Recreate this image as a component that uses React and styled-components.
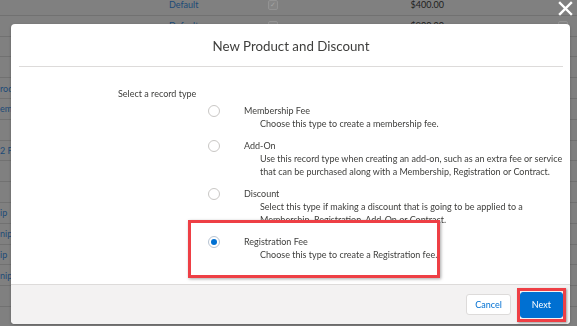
import React from 'react';
import styled, { createGlobalStyle } from 'styled-components';

const GlobalStyle = createGlobalStyle`
  html, body {
    margin: 0;
    padding: 0;
    background: #808080;
    overflow: hidden;
  }
  body {
    font-family: Lato, "Liberation Sans", sans-serif;
    color: #3e3e3c;
  }
`;

const Page = styled.div`
  width: 577px;
  height: 326px;
  overflow: hidden;
  margin-top: -5px;
`;

const Row = styled.div`
  box-sizing: border-box;
  height: 20.8px;
  border-bottom: 1px solid #717171;
  display: grid;
  grid-template-columns: 169px 99px 60px 116px 1fr;
  align-items: center;
  font-size: 9px;
  color: #1c1c1c;
`;

const LinkText = styled.span`
  color: #1c4a77;
  white-space: nowrap;
  overflow: hidden;
`;

const Price = styled.span`
  text-align: right;
  color: #1e1e1e;
`;

const Check = styled.span`
  box-sizing: border-box;
  width: 10px;
  height: 10px;
  border: 1px solid #939393;
  border-radius: 2px;
  background: #858585;
  display: flex;
  align-items: center;
  justify-content: center;
  color: #a4a4a4;
  font-size: 7px;
  margin-left: ${(p) => p.$shift || 0}px;
`;

const CloseButton = styled.button`
  position: fixed;
  top: 1px;
  right: 4px;
  width: 15px;
  height: 15px;
  padding: 0;
  border: none;
  background: none;
  cursor: pointer;
`;

const Modal = styled.section`
  position: fixed;
  left: 11px;
  top: 24px;
  width: 559px;
  height: 300px;
  background: #fff;
  border-radius: 4px;
  box-shadow: 0 1px 3px rgba(0, 0, 0, 0.25);
  display: flex;
  flex-direction: column;
`;

const Header = styled.header`
  box-sizing: border-box;
  height: 43px;
  padding-top: 2px;
  margin: 0 7px 0 8px;
  border-bottom: 1px solid #dddbda;
  display: flex;
  align-items: center;
  justify-content: center;
`;

const Title = styled.h2`
  margin: 0;
  font-size: 13.3px;
  font-weight: 400;
  color: #3e3e3c;
`;

const Body = styled.div`
  flex: 1;
  padding: 20px 0 0 107px;
  font-size: 9px;
  line-height: 13px;
  color: #3e3e3c;
`;

const Prompt = styled.div`
  margin-bottom: 4px;
`;

const Options = styled.div`
  margin-left: 90px;
  display: flex;
  flex-direction: column;
  gap: 9px;
`;

const Option = styled.label`
  display: grid;
  grid-template-columns: 12px 1fr;
  column-gap: 24px;
  position: relative;
  z-index: ${(p) => (p.$marked ? 2 : 0)};
`;

const Radio = styled.span`
  box-sizing: border-box;
  width: 12px;
  height: 12px;
  margin-top: 1px;
  border-radius: 50%;
  border: 1px solid ${(p) => (p.$checked ? '#b8c4d2' : '#c9c7c5')};
  background: #fff;
  display: flex;
  align-items: center;
  justify-content: center;
  &::after {
    content: '';
    width: 6px;
    height: 6px;
    border-radius: 50%;
    background: ${(p) => (p.$checked ? '#0070d2' : 'transparent')};
  }
`;

const Name = styled.div`
  color: #3e3e3c;
`;

const Desc = styled.div`
  padding-left: 16px;
  max-width: 309px;
`;

const Highlight = styled.div`
  box-sizing: border-box;
  position: absolute;
  left: -20px;
  top: -15px;
  width: 252px;
  height: 58px;
  border: 3px solid #ee3f45;
  background: #fff;
  box-shadow: 1px 1px 3px rgba(0, 0, 0, 0.35);
  z-index: -1;
`;

const Footer = styled.footer`
  box-sizing: border-box;
  height: 40px;
  background: #f3f2f2;
  border-top: 1px solid #dddbda;
  border-radius: 0 0 4px 4px;
  display: flex;
  align-items: center;
  justify-content: flex-end;
  gap: 9px;
  padding-right: 7px;
`;

const Button = styled.button`
  box-sizing: border-box;
  height: ${(p) => (p.$brand ? 26 : 21)}px;
  padding: 0 ${(p) => (p.$brand ? 11 : 8)}px;
  border-radius: 3px;
  border: 1px solid ${(p) => (p.$brand ? '#0070d2' : '#dddbda')};
  background: ${(p) => (p.$brand ? '#0070d2' : '#fff')};
  color: ${(p) => (p.$brand ? '#fff' : '#0070d2')};
  font-family: Lato, "Liberation Sans", sans-serif;
  font-size: 9px;
  cursor: pointer;
`;

const Marked = styled.span`
  position: relative;
  display: inline-flex;
  &::after {
    content: '';
    position: absolute;
    left: -3px;
    top: -4px;
    right: -3px;
    bottom: -4px;
    border: 3px solid #ee3f45;
    box-shadow: 1px 1px 2px rgba(0, 0, 0, 0.35);
    pointer-events: none;
  }
`;

const rows = [
  { link: 'Default', check: true, price: '$400.00' },
  { link: 'Default', check: false, price: '$900.00', right: true },
  {},
  {},
  { left: 'rod' },
  { left: 'emb' },
  {},
  { left: '2 F' },
  {},
  {},
  { left: 'ip' },
  { left: 'nip' },
  { left: 'ip' },
  { left: 'nip' },
  {},
  {},
];

const options = [
  {
    name: 'Membership Fee',
    desc: 'Choose this type to create a membership fee.',
  },
  {
    name: 'Add-On',
    desc: 'Use this record type when creating an add-on, such as an extra fee or service that can be purchased along with a Membership, Registration or Contract.',
  },
  {
    name: 'Discount',
    desc: 'Select this type if making a discount that is going to be applied to a Membership, Registration, Add-On or Contract.',
  },
  {
    name: 'Registration Fee',
    desc: 'Choose this type to create a Registration fee.',
    checked: true,
  },
];

export default function App() {
  return (
    <>
      <GlobalStyle />
      <Page>
        {rows.map((r, i) => (
          <Row key={i}>
            <LinkText>{r.left || ''}</LinkText>
            <LinkText>{r.link || ''}</LinkText>
            <span>{r.price ? <Check>{r.check ? '✓' : ''}</Check> : null}</span>
            <Price>{r.price || ''}</Price>
            <span>{r.right ? <Check $shift={114} /> : null}</span>
          </Row>
        ))}
      </Page>
      <CloseButton aria-label="Close">
        <svg width="15" height="15" viewBox="0 0 15 15">
          <path d="M2 2 L13 13 M13 2 L2 13" stroke="#fff" strokeWidth="2.4" strokeLinecap="square" />
        </svg>
      </CloseButton>
      <Modal>
        <Header>
          <Title>New Product and Discount</Title>
        </Header>
        <Body>
          <Prompt>Select a record type</Prompt>
          <Options>
            {options.map((o) => (
              <Option key={o.name} $marked={o.checked}>
                {o.checked && <Highlight />}
                <Radio $checked={o.checked} />
                <div>
                  <Name>{o.name}</Name>
                  <Desc>{o.desc}</Desc>
                </div>
              </Option>
            ))}
          </Options>
        </Body>
        <Footer>
          <Button>Cancel</Button>
          <Marked>
            <Button $brand>Next</Button>
          </Marked>
        </Footer>
      </Modal>
    </>
  );
}
